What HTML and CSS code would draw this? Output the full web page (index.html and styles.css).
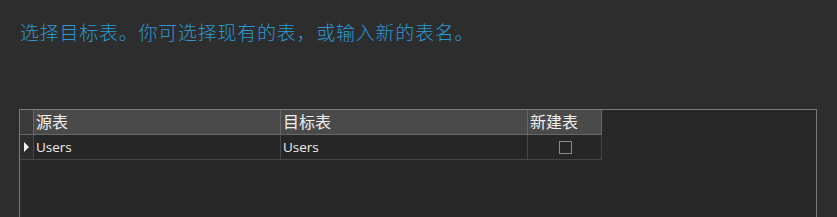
FILE: index.html
```html
<!DOCTYPE html>
<html lang="zh-CN">
<head>
    <meta charset="UTF-8">
    <title>选择目标表</title>
    <link rel="stylesheet" href="styles.css">
</head>
<body>
    <div class="page">
        <p class="hint">选择目标表。你可选择现有的表，或输入新的表名。</p>

        <div class="grid-box">
            <div class="grid">
                <div class="cell corner"></div>
                <div class="cell head">源表</div>
                <div class="cell head">目标表</div>
                <div class="cell head">新建表</div>

                <div class="cell row-head"><span class="arrow"></span></div>
                <div class="cell">Users</div>
                <div class="cell">Users</div>
                <div class="cell check-cell"><span class="checkbox"></span></div>
            </div>
        </div>
    </div>
</body>
</html>
```

FILE: styles.css
```css
html, body {
    margin: 0;
    height: 100%;
    background: #2d2d2d;
    overflow: hidden;
}

.page {
    padding: 18px 0 0 19px;
}

.hint {
    margin: 0;
    width: 600px;
    font-family: "Noto Sans CJK SC", sans-serif;
    font-weight: 300;
    font-size: 19px;
    line-height: 28px;
    letter-spacing: 0.75px;
    color: #2b98d3;
    padding-left: 1px;
}

.grid-box {
    margin-top: 63px;
    width: 798px;
    height: 140px;
    box-sizing: border-box;
    border: 1px solid #7a7a7a;
    border-bottom: none;
    background: #282828;
}

.grid {
    display: grid;
    grid-template-columns: 14px 247px 247px 74px;
    grid-auto-rows: 25px;
}

.cell {
    box-sizing: border-box;
    border-right: 1px solid #474747;
    border-bottom: 1px solid #474747;
    padding-left: 2px;
    font-family: "Segoe UI", "Open Sans", "Noto Sans", sans-serif;
    font-size: 13.5px;
    line-height: 24px;
    color: #f0f0f0;
    background: #262626;
    white-space: nowrap;
}

.corner {
    background: #3a3a3a;
    border-color: #686868;
}

.head {
    background: #4a4a4a;
    border-color: #686868;
    font-family: "Noto Sans CJK SC", sans-serif;
    font-size: 16px;
    line-height: 23px;
    padding-left: 2px;
}

.row-head {
    background: #2c2c2c;
    position: relative;
    padding: 0;
}

.arrow {
    position: absolute;
    left: 4px;
    top: 7px;
    width: 0;
    height: 0;
    border-top: 5px solid transparent;
    border-bottom: 5px solid transparent;
    border-left: 5px solid #f2f2f2;
}

.check-cell {
    display: flex;
    justify-content: center;
    align-items: center;
    padding: 0;
}

.checkbox {
    width: 13px;
    height: 13px;
    box-sizing: border-box;
    border: 1px solid #8a8a8a;
    margin-left: 1px;
}
```
